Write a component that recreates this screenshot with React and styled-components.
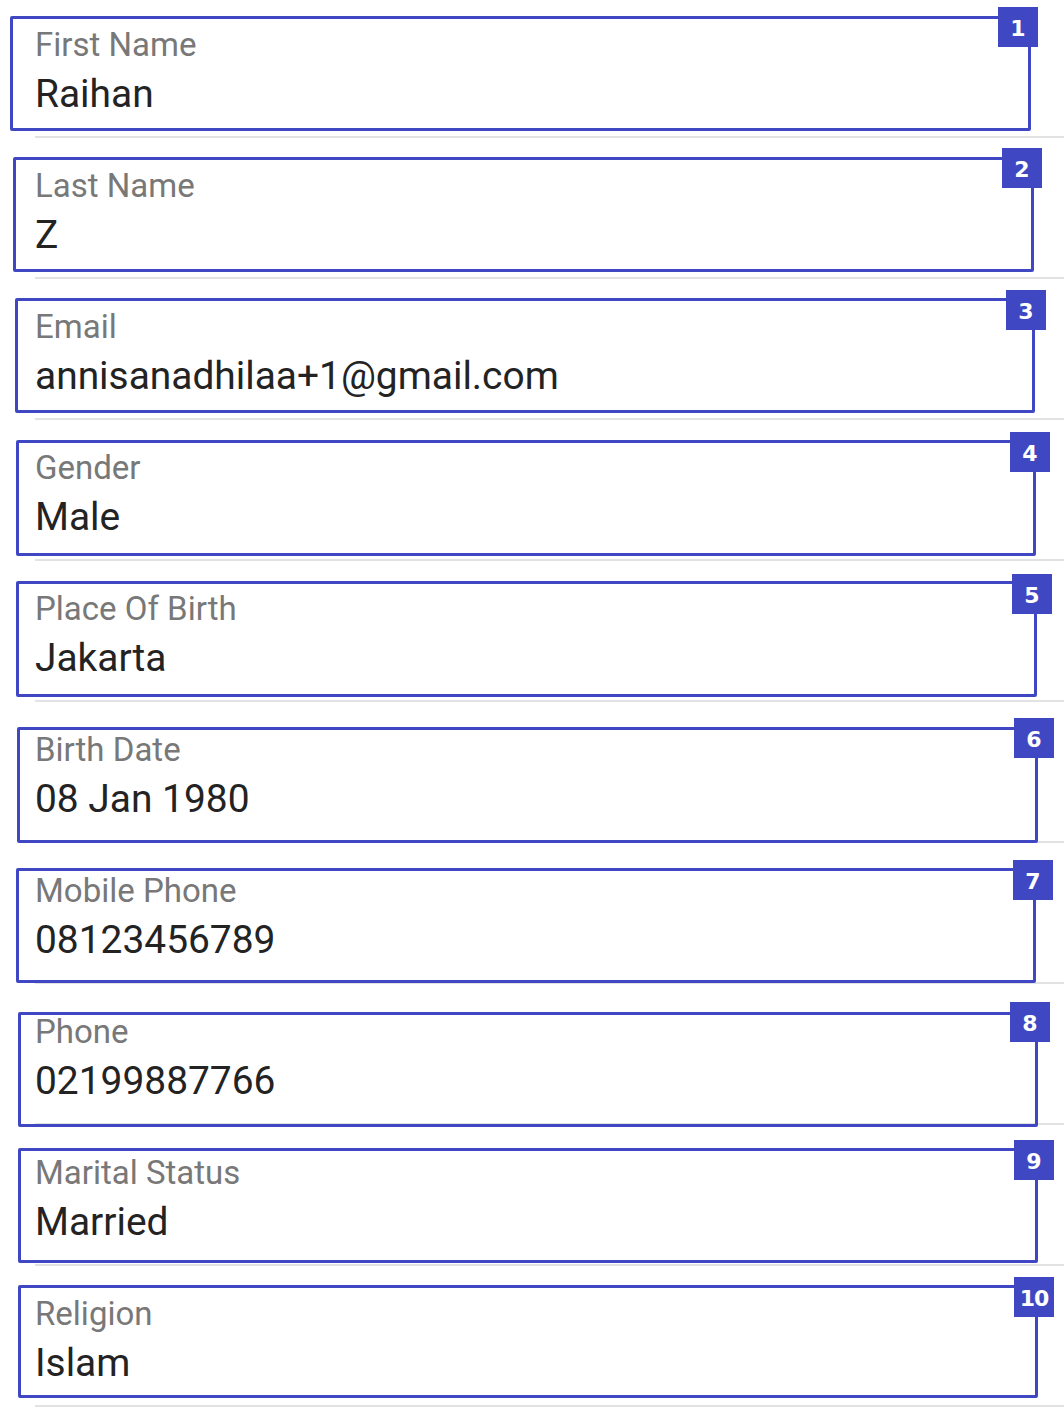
import React from "react";
import styled, { createGlobalStyle } from "styled-components";

const GlobalStyle = createGlobalStyle`
  html, body {
    margin: 0;
    padding: 0;
    background: #fff;
  }
  body {
    overflow: hidden;
  }
`;

const fields = [
  { label: "First Name", value: "Raihan" },
  { label: "Last Name", value: "Z" },
  { label: "Email", value: "annisanadhilaa+1@gmail.com" },
  { label: "Gender", value: "Male" },
  { label: "Place Of Birth", value: "Jakarta" },
  { label: "Birth Date", value: "08 Jan 1980" },
  { label: "Mobile Phone", value: "08123456789" },
  { label: "Phone", value: "02199887766" },
  { label: "Marital Status", value: "Married" },
  { label: "Religion", value: "Islam" },
];

/* overlay boxes: outer rect + badge top-left, page coords */
const marks = [
  { l: 10, t: 16, r: 1031, b: 131, bx: 998, by: 7 },
  { l: 13, t: 157, r: 1034, b: 272, bx: 1002, by: 148 },
  { l: 15, t: 298, r: 1035, b: 413, bx: 1006, by: 290 },
  { l: 16, t: 440, r: 1036, b: 556, bx: 1010, by: 432 },
  { l: 16, t: 581, r: 1037, b: 697, bx: 1012, by: 574 },
  { l: 17, t: 727, r: 1038, b: 843, bx: 1014, by: 718 },
  { l: 16, t: 868, r: 1036, b: 983, bx: 1013, by: 860 },
  { l: 18, t: 1012, r: 1038, b: 1127, bx: 1010, by: 1002 },
  { l: 18, t: 1148, r: 1038, b: 1263, bx: 1014, by: 1140 },
  { l: 18, t: 1285, r: 1038, b: 1398, bx: 1014, by: 1277 },
];

const Page = styled.div`
  position: relative;
  width: 1064px;
  height: 1407px;
  overflow: hidden;
  background: #fff;
  font-family: Roboto, "Noto Sans", sans-serif;
`;

const FieldList = styled.div`
  display: flex;
  flex-direction: column;
  margin-top: -3.5px;
`;

const FieldRow = styled.div`
  box-sizing: border-box;
  height: 141px;
  margin-left: 35px;
  padding: 28px 0 0 0;
  border-bottom: 2px solid #e2e2e2;
  display: flex;
  flex-direction: column;
  gap: 6px;
`;

const Label = styled.div`
  font-size: 33px;
  line-height: 40px;
  color: #787878;
  white-space: nowrap;
`;

const Value = styled.div`
  font-size: 38.9px;
  line-height: 46px;
  color: #232323;
  white-space: nowrap;
`;

const MarkBox = styled.div`
  position: absolute;
  box-sizing: border-box;
  border: 3px solid #3f48c2;
  border-radius: 2px;
  pointer-events: none;
`;

const Badge = styled.div`
  position: absolute;
  box-sizing: border-box;
  width: 40px;
  height: 40px;
  padding-top: 3px;
  background: #3f48c2;
  color: #fff;
  font-family: "DejaVu Sans", Verdana, sans-serif;
  font-weight: bold;
  font-size: 22px;
  display: flex;
  align-items: center;
  justify-content: center;
  letter-spacing: ${(p) => (p.$wide ? "-1px" : "0")};
`;

export default function App() {
  return (
    <Page>
      <GlobalStyle />
      <FieldList>
        {fields.map((f) => (
          <FieldRow key={f.label}>
            <Label>{f.label}</Label>
            <Value>{f.value}</Value>
          </FieldRow>
        ))}
      </FieldList>
      {marks.map((m, i) => (
        <React.Fragment key={i}>
          <MarkBox
            style={{ left: m.l, top: m.t, width: m.r - m.l, height: m.b - m.t }}
          />
          <Badge $wide={i >= 9} style={{ left: m.bx, top: m.by }}>
            {i + 1}
          </Badge>
        </React.Fragment>
      ))}
    </Page>
  );
}
